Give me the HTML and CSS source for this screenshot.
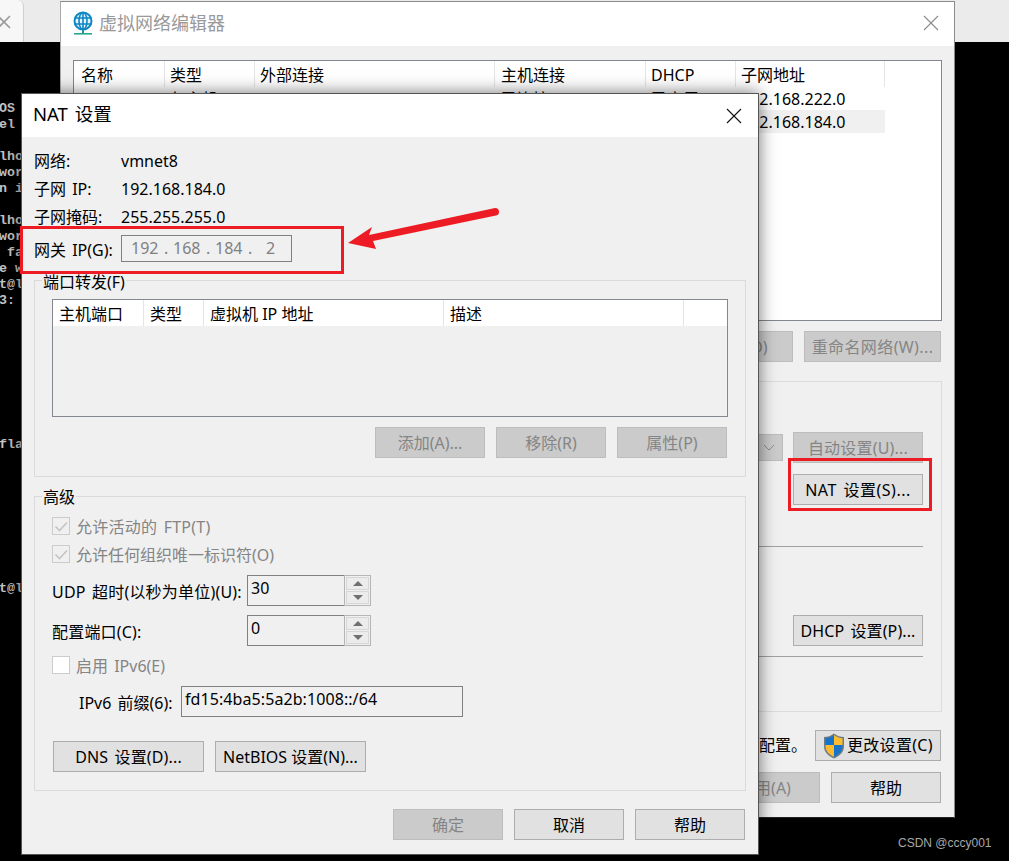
FILE: index.html
```html
<!DOCTYPE html>
<html lang="zh-CN">
<head>
<meta charset="utf-8">
<title>NAT 设置</title>
<link rel="stylesheet" href="styles.css">
</head>
<body>
<div class="desktop">
  <div class="tabbar"><div class="tab"><svg class="tab-x" viewBox="0 0 12 14"><path d="M-2 1 L10 13 M10 1 L-2 13"/></svg></div></div>
  <pre class="console">OS
el

lho
wor
n i

lho
wor
 fa
e w
t@l
3:








fla








t@l</pre>

  <section class="window back">
    <header class="titlebar back-title">
      <svg class="globe" viewBox="0 0 20 24">
        <circle cx="10" cy="10" r="8.5" fill="#e6f4fb" stroke="#0f86c6" stroke-width="2"/>
        <ellipse cx="10" cy="10" rx="4" ry="8.5" fill="none" stroke="#0f86c6" stroke-width="1.6"/>
        <path d="M1.5 7 H18.5 M1.5 13 H18.5 M10 1.5 V18.5" stroke="#0f86c6" stroke-width="1.6"/>
        <path d="M10 19 V22" stroke="#2b8f9f" stroke-width="2"/>
        <path d="M1 22.8 H19" stroke="#25a88f" stroke-width="1.6"/>
      </svg>
      <h2 class="title-text">虚拟网络编辑器</h2>
      <svg class="close close-back" viewBox="0 0 16 16"><path d="M1 1 L15 15 M15 1 L1 15"/></svg>
    </header>
    <div class="back-body">
      <div class="list back-list">
        <div class="list-head back-cols">
          <span>名称</span><span>类型</span><span>外部连接</span><span>主机连接</span><span>DHCP</span><span>子网地址</span>
        </div>
        <div class="list-row back-cols">
          <span></span><span>仅主机...</span><span></span><span>已连接</span><span>已启用</span><span>192.168.222.0</span>
        </div>
        <div class="list-row back-cols is-selected">
          <span></span><span></span><span></span><span></span><span></span><span>192.168.184.0</span>
        </div>
      </div>
      <div class="btn-row back-actions">
        <button class="btn is-off btn-remove">移除网络(O)</button>
        <button class="btn is-off btn-rename">重命名网络(W)...</button>
      </div>
      <div class="back-group">
        <div class="auto-row">
          <div class="combo"><svg class="chev" viewBox="0 0 12 7"><path d="M1 1 L6 6 L11 1"/></svg></div>
          <button class="btn is-off btn-side btn-auto">自动设置(U)...</button>
        </div>
        <button class="btn btn-side nat-btn">NAT 设置(S)...</button>
        <div class="rule rule-a"></div>
        <button class="btn btn-side dhcp-btn">DHCP 设置(P)...</button>
        <div class="rule rule-b"></div>
      </div>
      <div class="admin-row">
        <span>需要具备管理员特权才能修改网络配置。</span>
        <button class="btn btn-admin">
          <svg class="shield" viewBox="0 0 22 26">
            <path d="M11 .5 C8 3 4.500 4 1 4 V13 C1 19 5 23 11 25.500 C17 23 21 19 21 13 V4 C17.500 4 14 3 11 .5 Z" fill="#6f7b86"/>
            <path d="M11 2 C8.500 4 5.500 5 2.500 5.200 V12 H11 Z" fill="#1573c9"/>
            <path d="M11 2 C13.500 4 16.500 5 19.500 5.200 V12 H11 Z" fill="#fcbc2d"/>
            <path d="M2.500 12 H11 V23.800 C6 21.500 2.500 18 2.500 13 Z" fill="#fcbc2d"/>
            <path d="M19.500 12 H11 V23.800 C16 21.500 19.500 18 19.500 13 Z" fill="#1573c9"/>
          </svg>更改设置(C)
        </button>
      </div>
      <div class="btn-row back-footer">
        <button class="btn is-off btn-main">应用(A)</button>
        <button class="btn btn-main">帮助</button>
      </div>
    </div>
  </section>

  <section class="window front">
    <header class="titlebar front-title">
      <h1 class="title-text">NAT 设置</h1>
      <svg class="close close-front" viewBox="0 0 16 16"><path d="M1 1 L15 15 M15 1 L1 15"/></svg>
    </header>
    <div class="front-body">
      <div class="info">
        <span>网络:</span><span>vmnet8</span>
        <span>子网 IP:</span><span>192.168.184.0</span>
        <span>子网掩码:</span><span>255.255.255.0</span>
      </div>
      <div class="gateway">
        <label class="gateway-label">网关 IP(G):</label>
        <div class="ip-input">
          <span class="octet">192</span><span class="dot">.</span>
          <span class="octet">168</span><span class="dot">.</span>
          <span class="octet">184</span><span class="dot">.</span>
          <span class="octet last">2</span>
        </div>
      </div>

      <div class="group ports">
        <div class="legend">端口转发(F)</div>
        <div class="list port-list">
          <div class="list-head port-cols">
            <span>主机端口</span><span>类型</span><span>虚拟机 IP 地址</span><span>描述</span>
          </div>
        </div>
        <div class="btn-row port-actions">
          <button class="btn is-off btn-main">添加(A)...</button>
          <button class="btn is-off btn-main">移除(R)</button>
          <button class="btn is-off btn-main">属性(P)</button>
        </div>
      </div>

      <div class="group advanced">
        <div class="legend">高级</div>
        <div class="check-row first"><span class="check"><svg viewBox="0 0 16 16"><path d="M2.500 8.500 L6.500 12.500 L14 4.500"/></svg></span><span class="ftp-text">允许活动的 FTP(T)</span></div>
        <div class="check-row second"><span class="check"><svg viewBox="0 0 16 16"><path d="M2.500 8.500 L6.500 12.500 L14 4.500"/></svg></span><span>允许任何组织唯一标识符(O)</span></div>
        <div class="field udp">
          <label class="field-label wide-label">UDP 超时(以秒为单位)(U):</label>
          <div class="spin">
            <span class="spin-value">30</span>
            <div class="spin-btns"><span class="spin-btn"><i class="up"></i></span><span class="spin-btn"><i class="down"></i></span></div>
          </div>
        </div>
        <div class="field cfg">
          <label class="field-label wide-label">配置端口(C):</label>
          <div class="spin">
            <span class="spin-value">0</span>
            <div class="spin-btns"><span class="spin-btn"><i class="up"></i></span><span class="spin-btn"><i class="down"></i></span></div>
          </div>
        </div>
        <div class="check-row third"><span class="check is-empty"></span><span>启用 IPv6(E)</span></div>
        <div class="field ipv6">
          <label class="ipv6-label">IPv6 前缀(6):</label>
          <div class="text-input">fd15:4ba5:5a2b:1008::/64</div>
        </div>
        <div class="adv-actions">
          <button class="btn btn-dns">DNS 设置(D)...</button>
          <button class="btn btn-dns btn-netbios">NetBIOS 设置(N)...</button>
        </div>
      </div>

      <div class="btn-row front-footer">
        <button class="btn is-off btn-main">确定</button>
        <button class="btn btn-main">取消</button>
        <button class="btn btn-main">帮助</button>
      </div>
    </div>
  </section>

  <div class="mark mark-gateway"></div>
  <div class="mark mark-nat"></div>
  <svg class="arrow" viewBox="0 0 165 55">
    <path d="M8 43 L32 27 L29 35 L155 8 Q159 8 159 12 Q159 15 156 15.500 L33 41 L36 49 Z"/>
  </svg>
  <div class="watermark">CSDN @cccy001</div>
</div>
</body>
</html>
```
FILE: styles.css
```css
* { box-sizing: border-box; }
html, body { margin: 0; padding: 0; background: #000; }
body { font-family: "Noto Sans", "Noto Sans CJK SC", sans-serif; font-size: 16px; color: #000; }
.desktop { position: relative; width: 1009px; height: 861px; overflow: hidden; background: #000; word-spacing: 2px; }

.tabbar { height: 42px; background: #ebebeb; }
.tab { width: 24px; height: 42px; background: #f7f7f7; border-right: 1px solid #cfcfcf; border-radius: 0 6px 0 0; padding-top: 15px; }
.tab-x { display: block; width: 12px; height: 14px; }
.tab-x path { stroke: #9a9a9a; stroke-width: 1.6; fill: none; }

.console { margin: 59px 0 0 -1px; width: 30px; overflow: hidden; color: #c4c4c4; font: bold 13.33px/16px "Liberation Mono", monospace; word-spacing: 0; }

.window { position: absolute; background: #f0f0f0; }
.back { left: 60px; top: 1px; width: 895px; height: 817px; border: 1px solid #8a8a8a; border-bottom-color: #222; border-left-color: #aaa; }
.front { left: 21px; top: 93px; width: 738px; height: 762px; border: 1px solid #555; box-shadow: 0 0 16px rgba(0,0,0,.55); }

.titlebar { display: flex; align-items: center; background: #fff; }
.back-title { height: 44px; padding: 0 15px 2px 12px; }
.front-title { height: 43px; padding: 0 16px 4px 11px; }
.title-text { margin: 0; font-size: 18px; line-height: 24px; font-weight: 400; flex: 1; }
.front-title .title-text { font-size: 18.5px; }
.back-title .title-text { color: #999; margin-left: 6px; }
.globe { width: 20px; height: 24px; }
.close { width: 16px; height: 16px; }
.close path { stroke: #111; stroke-width: 1.1; fill: none; }
.close-back path { stroke: #8a8a8a; }
.close-front { margin-top: 4px; }

.btn { display: block; width: 110px; height: 31px; padding: 2px 0 0; margin: 0; font: inherit; font-size: 16px; line-height: 25px; color: #000; background: #e1e1e1; border: 1px solid #adadad; white-space: nowrap; word-spacing: 2px; }
.btn.is-off { background: #cbcbcb; border-color: #bdbdbd; color: #858585; }
.btn-row { display: flex; justify-content: flex-end; gap: 11px; }

.list { background: #fff; border: 1px solid #828790; word-spacing: 0; }
.list-head, .list-row { display: grid; }
.list-head { height: 26px; align-items: start; background: #fff; }
.list-head span { height: 26px; line-height: 28px; border-right: 1px solid #e5e5e5; white-space: nowrap; }
.list-row { height: 23px; }
.list-row span { height: 23px; line-height: 24px; white-space: nowrap; overflow: hidden; }
.back-cols { grid-template-columns: 91px 90px 240px 151px 90px 149px; width: 811px; }
.back-cols span { padding-left: 5px; }
.back-cols span:first-child { padding-left: 7px; }
.back-cols span:nth-child(4) { padding-left: 6px; }
.port-cols { grid-template-columns: 91px 60px 240px 240px; }
.port-cols span { padding-left: 6px; }
.is-selected { background: #f0f0f0; }

.back-body { padding: 14px 12px 0; }
.back-list { height: 261px; }
.back-actions { margin-top: 10px; padding-right: 1px; }
.btn-remove { width: 137px; }
.btn-rename { width: 137px; letter-spacing: .4px; }
.back-group { margin-top: 19px; height: 331px; border: 1px solid #dcdcdc; padding: 50px 18px 0 0; display: flex; flex-direction: column; align-items: flex-end; }
.auto-row { display: flex; gap: 10px; align-items: center; }
.combo { width: 240px; height: 27px; background: #cbcbcb; border: 1px solid #bdbdbd; display: flex; align-items: center; justify-content: flex-end; padding-right: 7px; }
.chev { width: 12px; height: 7px; }
.chev path { stroke: #8c8c8c; stroke-width: 1; fill: none; }
.btn-side { width: 130px; }
.btn-auto { letter-spacing: .2px; }
.nat-btn { margin-top: 11px; letter-spacing: .5px; }
.rule { width: 780px; height: 1px; background: #a0a0a0; }
.rule-a { margin-top: 41px; }
.dhcp-btn { margin-top: 68px; letter-spacing: .1px; }
.rule-b { margin-top: 10px; }
.admin-row { display: flex; justify-content: flex-end; align-items: center; gap: 8px; margin-top: 18px; padding-right: 1px; line-height: 31px; }
.btn-admin { width: 126px; display: flex; align-items: center; padding: 0 0 0 7px; letter-spacing: .3px; }
.shield { width: 22px; height: 26px; flex: none; margin-right: 2px; }
.back-footer { margin-top: 11px; padding-right: 1px; }
.btn-main { width: 110px; }

.front-body { padding: 10px 12px 0; }
.info { display: grid; grid-template-columns: 87px auto; grid-auto-rows: 28px; line-height: 28px; white-space: nowrap; }
.gateway { display: flex; align-items: center; margin-top: 4px; height: 27px; }
.gateway-label { width: 87px; white-space: nowrap; }
.ip-input { width: 171px; height: 27px; display: flex; border: 1px solid #808080; padding-left: 9px; line-height: 24px; color: #808080; }
.octet { width: 33px; }
.dot { width: 9px; }
.last { padding-left: 9px; }

.group { border: 1px solid #dadada; padding: 0 17px; width: 712px; }
.ports { margin-top: 18px; height: 197px; }
.advanced { margin-top: 19px; height: 295px; }
.legend { margin: -11px 0 0 -10px; height: 22px; line-height: 22px; width: max-content; padding: 0 1px; background: #f0f0f0; position: relative; }
.ports .legend { line-height: 24px; }
.port-list { height: 118px; margin-top: 7px; background: #f0f0f0; }
.port-actions { margin-top: 10px; padding-right: 1px; }

.check-row { display: flex; align-items: center; height: 18px; gap: 6px; color: #858585; white-space: nowrap; }
.first { margin-top: 9px; }
.ftp-text { letter-spacing: .25px; }
.second { margin-top: 10px; }
.third { margin-top: 10px; }
.check { width: 18px; height: 18px; flex: none; border: 1px solid #cccccc; background: #f0f0f0; }
.check svg { display: block; width: 16px; height: 16px; }
.check path { stroke: #c4c4c4; stroke-width: 1.6; fill: none; }
.is-empty { background: #fff; }

.field { display: flex; align-items: center; height: 31px; }
.udp { margin-top: 12px; }
.cfg { margin-top: 9px; }
.ipv6 { margin-top: 12px; }
.field-label { width: 195px; white-space: nowrap; }
.wide-label { letter-spacing: .2px; }
.spin { width: 124px; height: 31px; display: flex; }
.spin-value { width: 97px; border: 1px solid #808080; border-right: 0; padding-left: 3px; line-height: 24px; }
.spin-btns { width: 27px; border: 1px solid #b5b5b5; padding: 1px; display: flex; flex-direction: column; gap: 1px; }
.spin-btn { flex: 1; border: 1px solid #d6d6d6; background: #ececec; display: flex; align-items: center; justify-content: center; }
.spin-btn i { width: 0; height: 0; border-left: 5px solid transparent; border-right: 5px solid transparent; }
.up { border-bottom: 5px solid #707070; }
.down { border-top: 5px solid #707070; }
.ipv6-label { width: 129px; padding-left: 27px; white-space: nowrap; }
.text-input { width: 282px; height: 31px; border: 1px solid #808080; padding-left: 3px; line-height: 24px; letter-spacing: .08px; }
.adv-actions { display: flex; gap: 11px; margin: 24px 0 0 1px; }
.btn-dns { width: 151px; letter-spacing: .15px; }
.btn-netbios { word-spacing: 0; letter-spacing: 0; }
.front-footer { margin-top: 18px; width: 712px; padding-right: 1px; }

.mark { position: absolute; border: 3px solid #ed1c24; }
.mark-gateway { left: 20px; top: 226px; width: 324px; height: 48px; }
.mark-nat { left: 788px; top: 458px; width: 144px; height: 53px; }
.arrow { position: absolute; left: 340px; top: 200px; width: 165px; height: 55px; }
.arrow path { fill: #ed1c24; }
.watermark { position: absolute; left: 898px; top: 835px; font: 12px/16px "Liberation Sans", sans-serif; color: #a8a8a8; word-spacing: 0; }
```
